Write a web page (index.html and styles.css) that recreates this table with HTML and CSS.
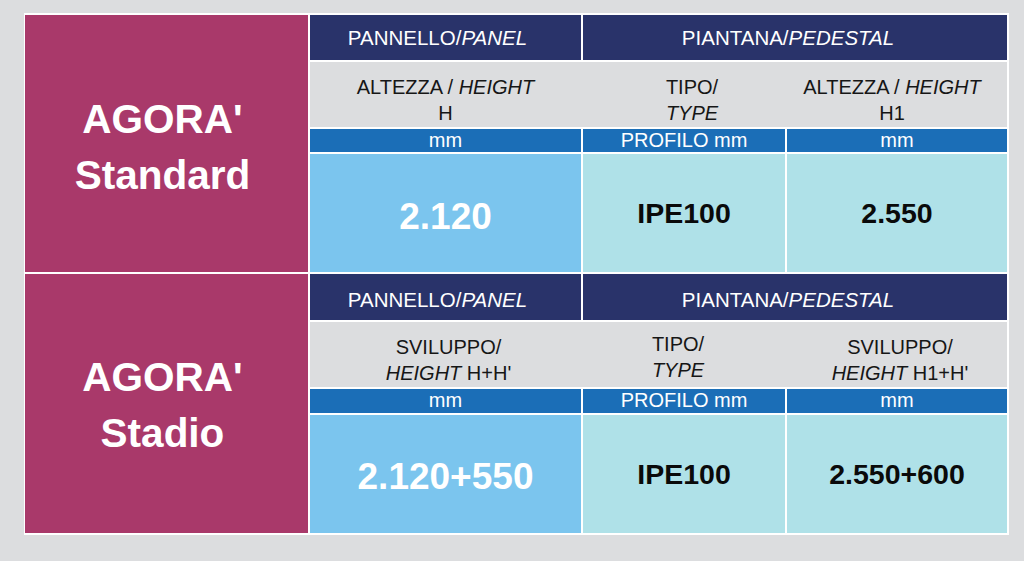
FILE: index.html
```html
<!DOCTYPE html>
<html lang="it">
<head>
<meta charset="utf-8">
<title>AGORA' table</title>
<link rel="stylesheet" href="styles.css">
</head>
<body>
<div class="table">
  <div class="section section-standard">
    <div class="model"><span>AGORA'<br>Standard</span></div>
    <div class="head head-panel">PANNELLO/<i>PANEL</i></div>
    <div class="head head-pedestal">PIANTANA/<i>PEDESTAL</i></div>
    <div class="labels">
      <div class="label">ALTEZZA / <i>HEIGHT</i><br>H</div>
      <div class="label label-type">TIPO/<br><i>TYPE</i></div>
      <div class="label label-h1">ALTEZZA / <i>HEIGHT</i><br>H1</div>
    </div>
    <div class="unit">mm</div>
    <div class="unit">PROFILO mm</div>
    <div class="unit">mm</div>
    <div class="value value-main">2.120</div>
    <div class="value value-side">IPE100</div>
    <div class="value value-side">2.550</div>
  </div>
  <div class="section section-stadio">
    <div class="model model-stadio"><span>AGORA'<br>Stadio</span></div>
    <div class="head head-panel">PANNELLO/<i>PANEL</i></div>
    <div class="head head-pedestal">PIANTANA/<i>PEDESTAL</i></div>
    <div class="labels">
      <div class="label label-shift">SVILUPPO/<br><i>HEIGHT</i> H+H'</div>
      <div class="label label-type2">TIPO/<br><i>TYPE</i></div>
      <div class="label label-shift">SVILUPPO/<br><i>HEIGHT</i> H1+H'</div>
    </div>
    <div class="unit">mm</div>
    <div class="unit">PROFILO mm</div>
    <div class="unit">mm</div>
    <div class="value value-main value-main2">2.120+550</div>
    <div class="value value-side">IPE100</div>
    <div class="value value-side">2.550+600</div>
  </div>
</div>
</body>
</html>
```

FILE: styles.css
```css
html, body {
  margin: 0;
  padding: 0;
}

body {
  background: #dcdddf;
  font-family: "Liberation Sans", Arial, sans-serif;
  width: 1024px;
  height: 561px;
  overflow: hidden;
}

.table {
  margin: 13px 0 0 24px;
  width: 985px;
  box-sizing: border-box;
  padding: 2px 2px 2px 1px;
  background: #ffffff;
  display: flex;
  flex-direction: column;
  gap: 2px;
}

.section {
  display: grid;
  grid-template-columns: 283px 271px 202px 220px;
  column-gap: 2px;
  row-gap: 2px;
}

.section-standard {
  grid-template-rows: 45px 65px 23px 118px;
}

.section-stadio {
  grid-template-rows: 46px 65px 24px 118px;
}

.model {
  grid-row: 1 / 5;
  grid-column: 1;
  background: #a9396a;
  color: #ffffff;
  font-weight: bold;
  font-size: 40.5px;
  line-height: 56px;
  display: flex;
  align-items: center;
  justify-content: center;
  text-align: center;
  padding-right: 8px;
  padding-top: 6px;
}

.model-stadio {
  padding-top: 2px;
}

.head {
  background: #29336a;
  color: #ffffff;
  font-size: 20.5px;
  display: flex;
  align-items: center;
  justify-content: center;
}

.head-panel {
  grid-column: 2;
  padding-right: 16px;
}

.head-pedestal {
  grid-column: 3 / 5;
  padding-right: 14px;
}

.section-stadio .head {
  padding-top: 6px;
}

.labels {
  grid-column: 2 / 5;
  background: #dcdddf;
  display: grid;
  grid-template-columns: 271px 202px 220px;
  column-gap: 2px;
}

.label {
  color: #161616;
  font-size: 20px;
  line-height: 26px;
  text-align: center;
  padding-top: 12px;
}

.label-type {
  padding-left: 16px;
}

.label-h1 {
  padding-right: 10px;
}

.label-shift {
  padding-left: 6px;
}

.label-type2 {
  padding-top: 9px;
  padding-right: 12px;
}

.unit {
  background: #1b6eb7;
  color: #ffffff;
  font-size: 20px;
  line-height: 20px;
  display: flex;
  align-items: center;
  justify-content: center;
  padding-bottom: 2px;
}

.value {
  display: flex;
  align-items: center;
  justify-content: center;
  font-weight: bold;
}

.value-main {
  background: #7bc5ee;
  color: #ffffff;
  font-size: 37px;
  padding-top: 8px;
}

.value-main2 {
  padding-top: 6px;
}

.value-side {
  background: #afe1e8;
  color: #0a0a0a;
  font-size: 28.5px;
}
```
